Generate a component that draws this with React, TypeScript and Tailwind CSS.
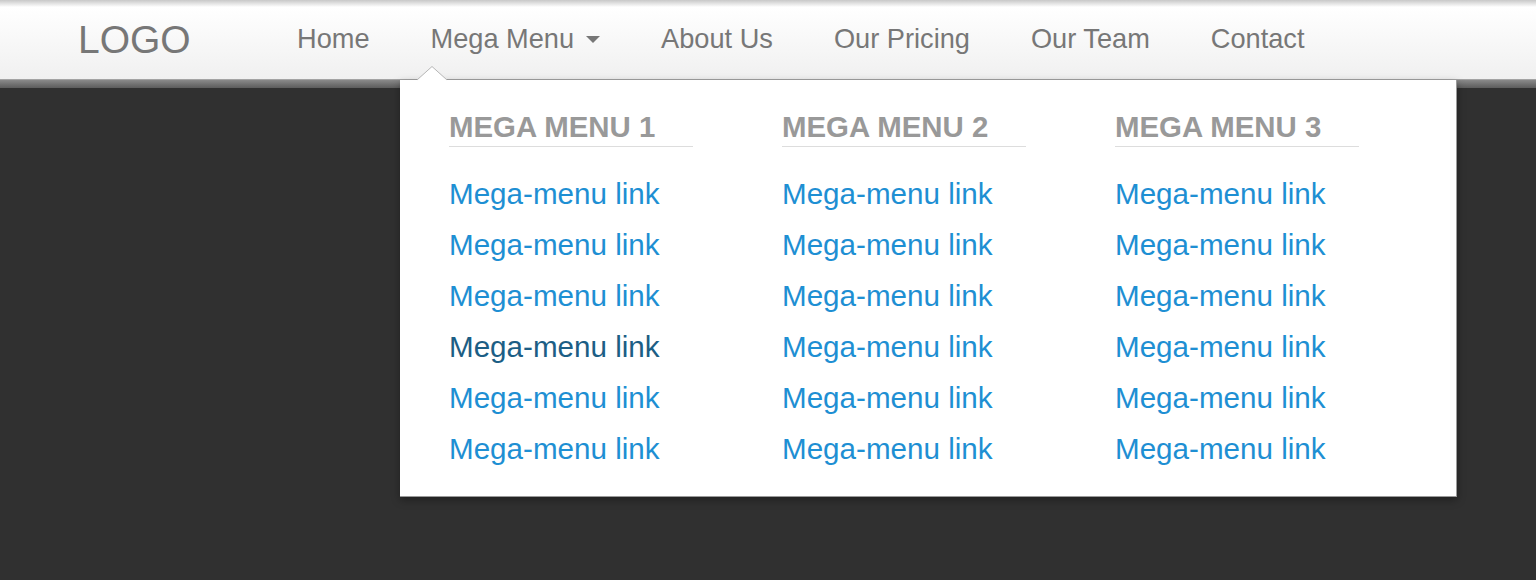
const navItems = ['Home', 'Mega Menu', 'About Us', 'Our Pricing', 'Our Team', 'Contact'];

const columns = ['MEGA MENU 1', 'MEGA MENU 2', 'MEGA MENU 3'];

export default function App() {
    return (
        <div className="relative h-[580px] w-full overflow-hidden bg-[#303030] font-['Liberation_Sans',Arial,sans-serif]">
            {/* Top navbar */}
            <header className="h-[80px] border-b border-[#a3a3a3] bg-gradient-to-b from-[#c8c8c8] via-[#ffffff] via-[9%] to-[#f0f0f0]">
                <div className="flex h-full items-center pl-[78px]">
                    <a className="w-[188.5px] text-[39px] leading-none text-[#777777]">LOGO</a>
                    <ul className="flex items-center">
                        {navItems.map((item) => (
                            <li key={item} className="flex items-center px-[30.5px] text-[27.2px] text-[#777777]">
                                {item}
                                {item === 'Mega Menu' && (
                                    <svg width="14" height="8" viewBox="0 0 14 8" className="ml-[12px] mt-[2px]">
                                        <polygon points="0,0 14,0 7,7" fill="#777777" />
                                    </svg>
                                )}
                            </li>
                        ))}
                    </ul>
                </div>
            </header>
            <div className="h-2 bg-gradient-to-b from-[#8a8a8a] to-[#5c5c5c]" />

            {/* Caret above dropdown */}
            <svg
                width="30"
                height="15"
                viewBox="0 0 30 15"
                className="absolute left-[417px] top-[66px] z-20"
            >
                <polygon points="0,14 15,0.5 30,14 30,15 0,15" fill="#ffffff" />
                <polyline points="0,14 15,0.5 30,14" fill="none" stroke="#b5b5b5" strokeWidth="1" />
            </svg>

            {/* Mega menu dropdown */}
            <div className="absolute left-[400px] top-[80px] z-10 h-[417px] w-[1057px] border-r border-b border-[#9a9a9a] bg-white pl-[49px] pt-[31px] shadow-[0_3px_8px_rgba(0,0,0,0.35)]">
                <div className="grid grid-cols-[333px_333px_333px]">
                    {columns.map((title, ci) => (
                        <div key={title} className="w-[244px]">
                            <h3 className="border-b border-[#dddddd] pb-[3px] text-[29.4px] font-bold leading-[32px] text-[#999999]">
                                {title}
                            </h3>
                            <ul className="mt-[21px]">
                                {Array.from({ length: 6 }).map((_, i) => (
                                    <li key={i} className="text-[29.6px] leading-[51px]">
                                        <a
                                            className={
                                                ci === 0 && i === 3
                                                    ? 'text-[#1c5e85]'
                                                    : 'text-[#1e8fd3]'
                                            }
                                        >
                                            Mega-menu link
                                        </a>
                                    </li>
                                ))}
                            </ul>
                        </div>
                    ))}
                </div>
            </div>
        </div>
    );
}
